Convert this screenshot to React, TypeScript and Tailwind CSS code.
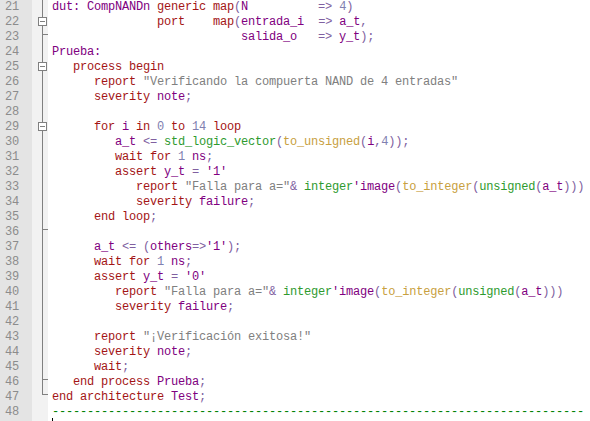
import React from "react";

type Tok = [string, string];
type Fold = "line" | "box" | "tick" | "corner" | "none";

const K = "text-[#a31515]"; // keyword
const P = "text-[#800080]"; // identifier
const O = "text-[#8060a0]"; // operator
const N = "text-[#8080b0]"; // number
const S = "text-[#808080]"; // string
const G = "text-[#2e9a2e]"; // green type
const T = "text-[#c8a040]"; // tan function
const C = "text-[#008000]"; // comment

const sp = (n: number): Tok => [" ".repeat(n), ""];

const lines: { n: number; fold: Fold; toks: Tok[] }[] = [
  { n: 21, fold: "line", toks: [["dut: CompNANDn", P], [" ", ""], ["generic map", K], ["(", O], ["N", P], sp(10), ["=>", O], [" ", ""], ["4", N], [")", O]] },
  { n: 22, fold: "box", toks: [sp(15), ["port", K], sp(4), ["map", K], ["(", O], ["entrada_i", P], sp(2), ["=>", O], [" ", ""], ["a_t", P], [",", O]] },
  { n: 23, fold: "tick", toks: [sp(27), ["salida_o", P], sp(3), ["=>", O], [" ", ""], ["y_t", P], [");", O]] },
  { n: 24, fold: "line", toks: [["Prueba:", P]] },
  { n: 25, fold: "box", toks: [sp(3), ["process begin", K]] },
  { n: 26, fold: "line", toks: [sp(6), ["report", K], [" \"Verificando la compuerta NAND de 4 entradas\"", S]] },
  { n: 27, fold: "line", toks: [sp(6), ["severity", K], [" note", P], [";", O]] },
  { n: 28, fold: "line", toks: [] },
  { n: 29, fold: "box", toks: [sp(6), ["for", K], [" i", P], [" in ", K], ["0", N], [" to ", K], ["14", N], [" loop", K]] },
  { n: 30, fold: "line", toks: [sp(9), ["a_t", P], [" <= ", O], ["std_logic_vector", G], ["(", O], ["to_unsigned", T], ["(", O], ["i", P], [",", O], ["4", N], ["));", O]] },
  { n: 31, fold: "line", toks: [sp(9), ["wait for", K], [" 1 ", N], ["ns", P], [";", O]] },
  { n: 32, fold: "line", toks: [sp(9), ["assert", K], [" y_t", P], [" = ", O], ["'1'", P]] },
  { n: 33, fold: "line", toks: [sp(12), ["report", K], [" \"Falla para a=\"", S], ["&", O], [" integer", G], ["'image", P], ["(", O], ["to_integer", T], ["(", O], ["unsigned", G], ["(", O], ["a_t", P], [")))", O]] },
  { n: 34, fold: "line", toks: [sp(12), ["severity", K], [" failure", P], [";", O]] },
  { n: 35, fold: "line", toks: [sp(6), ["end loop", K], [";", O]] },
  { n: 36, fold: "tick", toks: [] },
  { n: 37, fold: "line", toks: [sp(6), ["a_t", P], [" <= ", O], ["(", O], ["others", P], ["=>", O], ["'1'", P], [");", O]] },
  { n: 38, fold: "line", toks: [sp(6), ["wait for", K], [" 1 ", N], ["ns", P], [";", O]] },
  { n: 39, fold: "line", toks: [sp(6), ["assert", K], [" y_t", P], [" = ", O], ["'0'", P]] },
  { n: 40, fold: "line", toks: [sp(9), ["report", K], [" \"Falla para a=\"", S], ["&", O], [" integer", G], ["'image", P], ["(", O], ["to_integer", T], ["(", O], ["unsigned", G], ["(", O], ["a_t", P], [")))", O]] },
  { n: 41, fold: "line", toks: [sp(9), ["severity", K], [" failure", P], [";", O]] },
  { n: 42, fold: "line", toks: [] },
  { n: 43, fold: "line", toks: [sp(6), ["report", K], [" \"¡Verificación exitosa!\"", S]] },
  { n: 44, fold: "line", toks: [sp(6), ["severity", K], [" note", P], [";", O]] },
  { n: 45, fold: "line", toks: [sp(6), ["wait", K], [";", O]] },
  { n: 46, fold: "tick", toks: [sp(3), ["end process", K], [" Prueba", P], [";", O]] },
  { n: 47, fold: "corner", toks: [["end architecture", K], [" Test", P], [";", O]] },
  { n: 48, fold: "none", toks: [["-".repeat(76), C]] },
];

function FoldMark({ kind }: { kind: Fold }) {
  const stroke = "#808080";
  return (
    <svg width="16" height="15" viewBox="0 0 16 15" className="block">
      {kind === "line" && <line x1="10.5" y1="0" x2="10.5" y2="15" stroke={stroke} />}
      {kind === "box" && (
        <>
          <line x1="10.5" y1="0" x2="10.5" y2="2" stroke={stroke} />
          <rect x="6.5" y="2.5" width="8" height="8" fill="#ffffff" stroke={stroke} />
          <line x1="8" y1="6.5" x2="13" y2="6.5" stroke={stroke} />
          <line x1="10.5" y1="11" x2="10.5" y2="15" stroke={stroke} />
        </>
      )}
      {kind === "tick" && (
        <>
          <line x1="10.5" y1="0" x2="10.5" y2="15" stroke={stroke} />
          <line x1="10.5" y1="4.5" x2="16" y2="4.5" stroke={stroke} />
        </>
      )}
      {kind === "corner" && (
        <>
          <line x1="10.5" y1="0" x2="10.5" y2="5" stroke={stroke} />
          <line x1="10.5" y1="4.5" x2="16" y2="4.5" stroke={stroke} />
        </>
      )}
    </svg>
  );
}

export default function App() {
  return (
    <div
      className="w-[590px] h-[421px] overflow-hidden bg-white relative"
      style={{ fontFamily: '"Liberation Mono", "Courier New", monospace' }}
    >
      {lines.map((l) => (
        <div key={l.n} className="flex h-[15px] leading-[15px] text-[12px] tracking-[-0.2px]">
          <div className="w-[32px] shrink-0 bg-[#e4e4e4] pl-[5px] text-[#8c8c8c]">{l.n}</div>
          <div className="w-[16px] shrink-0 bg-[#f2f2f2]">
            <FoldMark kind={l.fold} />
          </div>
          <div className="pl-[4px] whitespace-pre">
            {l.toks.map((t, i) => (
              <span key={i} className={t[1]}>
                {t[0]}
              </span>
            ))}
          </div>
        </div>
      ))}
      <div className="flex h-[15px]">
        <div className="w-[32px] shrink-0 bg-[#e4e4e4]" />
        <div className="w-[16px] shrink-0 bg-[#f2f2f2]" />
        <div className="ml-[4px] mt-[-2px] w-[1px] h-[4px] bg-black" />
      </div>
    </div>
  );
}
